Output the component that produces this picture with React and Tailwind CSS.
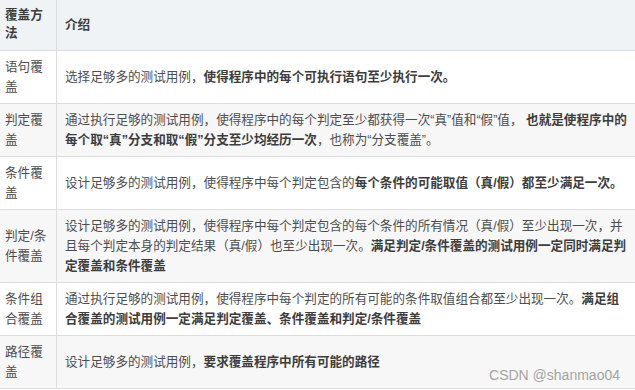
import React from "react";

const B = ({ children }) => <b className="font-bold text-[#3d3d3d]">{children}</b>;

const rows = [
  {
    name: ["语句覆", "盖"],
    bg: "bg-white",
    lines: [
      <>选择足够多的测试用例，<B>使得程序中的每个可执行语句至少执行一次。</B></>,
    ],
  },
  {
    name: ["判定覆", "盖"],
    bg: "bg-[#f7f7f7]",
    lines: [
      <>通过执行足够的测试用例，使得程序中的每个判定至少都获得一次“真”值和“假”值， <B>也就是使程序中的</B></>,
      <><B>每个取“真”分支和取“假”分支至少均经历一次</B>，也称为“分支覆盖”。</>,
    ],
  },
  {
    name: ["条件覆", "盖"],
    bg: "bg-white",
    lines: [
      <>设计足够多的测试用例，使得程序中每个判定包含的<B>每个条件的可能取值（真/假）都至少满足一次。</B></>,
    ],
  },
  {
    name: ["判定/条", "件覆盖"],
    bg: "bg-[#f7f7f7]",
    lines: [
      <>设计足够多的测试用例，使得程序中每个判定包含的每个条件的所有情况（真/假）至少出现一次，并</>,
      <>且每个判定本身的判定结果（真/假）也至少出现一次。<B>满足判定/条件覆盖的测试用例一定同时满足判</B></>,
      <><B>定覆盖和条件覆盖</B></>,
    ],
  },
  {
    name: ["条件组", "合覆盖"],
    bg: "bg-white",
    lines: [
      <>通过执行足够的测试用例，使得程序中每个判定的所有可能的条件取值组合都至少出现一次。<B>满足组</B></>,
      <><B>合覆盖的测试用例一定满足判定覆盖、条件覆盖和判定/条件覆盖</B></>,
    ],
  },
  {
    name: ["路径覆", "盖"],
    bg: "bg-[#f7f7f7]",
    lines: [
      <>设计足够多的测试用例，<B>要求覆盖程序中所有可能的路径</B></>,
    ],
  },
];

export default function App() {
  return (
    <div
      className="relative w-[635px] h-[390px] overflow-hidden bg-white text-[12.6px] leading-[20px] text-[#4d4d4d]"
      style={{ fontFamily: '"Liberation Sans", "Noto Sans CJK SC", sans-serif' }}
    >
      <div className="flex h-[51px] border-b border-[#dddddd] bg-[#eff3f6] font-bold text-[#3d3d3d]">
        <div className="w-[57px] shrink-0 border-r border-[#dddddd] pl-[5px] pb-[2px] flex flex-col justify-center leading-[18px]">
          <div>覆盖方</div>
          <div>法</div>
        </div>
        <div className="flex-1 pl-[8px] flex items-center">介绍</div>
      </div>
      {rows.map((r, i) => (
        <div key={i} className={`flex border-b border-[#dddddd] ${r.bg}`}>
          <div className="w-[57px] shrink-0 border-r border-[#dddddd] pl-[5px] py-[6px] flex flex-col justify-center">
            {r.name.map((n, j) => (
              <div key={j} className="whitespace-nowrap">{n}</div>
            ))}
          </div>
          <div className="flex-1 pl-[8px] py-[6px] flex flex-col justify-center">
            {r.lines.map((l, j) => (
              <div key={j} className="whitespace-nowrap">{l}</div>
            ))}
          </div>
        </div>
      ))}
      <div className="absolute right-[15px] bottom-[7px] text-[14px] leading-[16px] text-[#a3a3a3]">
        CSDN @shanmao04
      </div>
    </div>
  );
}
